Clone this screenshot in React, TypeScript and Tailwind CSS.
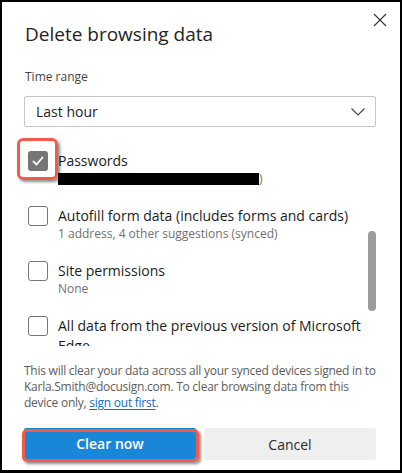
import React from "react";

const Box: React.FC<{ checked?: boolean }> = ({ checked }) =>
    checked ? (
        <div className="w-[20px] h-[20px] shrink-0 rounded-[3px] bg-[#767676] flex items-center justify-center">
            <svg width="14" height="14" viewBox="0 0 14 14" fill="none">
                <path d="M2.5 7.5 L5.5 10.5 L11.5 3.5" stroke="white" strokeWidth="1.8" strokeLinecap="round" strokeLinejoin="round" />
            </svg>
        </div>
    ) : (
        <div className="w-[20px] h-[20px] shrink-0 rounded-[3px] border border-[#767676] bg-white" />
    );

const Item: React.FC<{ title: string; sub?: React.ReactNode; checked?: boolean }> = ({ title, sub, checked }) => (
    <div className="flex gap-[10px] pl-[4px]">
        <Box checked={checked} />
        <div className="flex flex-col">
            <div className="text-[14px] leading-[20px] text-[#1b1b1b]">{title}</div>
            {sub && <div className="text-[12px] leading-[16px] text-[#707070]">{sub}</div>}
        </div>
    </div>
);

export default function App() {
    return (
        <div className="w-[402px] h-[473px] border-2 border-b-[3px] border-black bg-white relative flex flex-col px-[22px] font-['Open_Sans',sans-serif]">
            <button className="absolute right-[13px] top-[11px] w-[14px] h-[14px] flex items-center justify-center">
                <svg width="14" height="14" viewBox="0 0 14 14" fill="none">
                    <path d="M1 1 L13 13 M13 1 L1 13" stroke="#333" strokeWidth="1.1" />
                </svg>
            </button>

            <h1 className="mt-[18px] ml-[1px] text-[19px] leading-[28px] text-[#242424]">Delete browsing data</h1>

            <div className="mt-[21px] ml-[1px] text-[12px] leading-[16px] text-[#444]">Time range</div>

            <div className="mt-[11px] h-[31px] w-[352px] border border-[#c6c6c6] rounded-[2px] flex items-center justify-between pl-[11px] pr-[10px]">
                <span className="text-[14px] text-[#242424]">Last hour</span>
                <svg width="14" height="8" viewBox="0 0 14 8" fill="none">
                    <path d="M0.5 0.5 L7 7 L13.5 0.5" stroke="#444" strokeWidth="1.1" />
                </svg>
            </div>

            <div className="relative h-[217px] mt-[2px] overflow-hidden">
                <div className="flex flex-col gap-[19px] pt-[22px]">
                    <Item
                        title="Passwords"
                        checked
                        sub={
                            <span className="flex items-center">
                                <span className="inline-block w-[201px] h-[12px] bg-black" />
                                <span>)</span>
                            </span>
                        }
                    />
                    <Item title="Autofill form data (includes forms and cards)" sub="1 address, 4 other suggestions (synced)" />
                    <Item title="Site permissions" sub="None" />
                    <Item title="All data from the previous version of Microsoft Edge" />
                </div>
                <div className="absolute right-[2px] top-[102px] w-[8px] h-[80px] rounded-full bg-[#9c9c9c]" />
            </div>

            {/* red annotation around the Passwords checkbox */}
            <div className="absolute left-[15px] top-[136px] w-[41px] h-[42px] rounded-[6px] border-[3px] border-[#f25a4a] shadow-[2px_2px_3px_rgba(0,0,0,0.45)]" />

            <p className="mt-[17px] text-[12px] leading-[16px] tracking-[-0.25px] text-[#5c5c5c]">
                This will clear your data across all your synced devices signed in to Karla.Smith@docusign.com. To clear browsing data from this device only,{" "}
                <a className="text-[#0f6cbd] underline underline-offset-2">sign out first</a>.
            </p>

            <div className="mt-[17px] flex gap-[8px]">
                <div className="relative w-[172px]">
                    <button className="w-full h-[31px] bg-[#1a86d8] text-white text-[14px] font-semibold rounded-[2px]">Clear now</button>
                    <div className="absolute left-[-2px] top-[1px] w-[177px] h-[33px] rounded-[5px] border-[3px] border-[#f25a4a] shadow-[2px_2px_3px_rgba(0,0,0,0.45)]" />
                </div>
                <button className="w-[172px] h-[32px] bg-[#efefef] text-[#2b2b2b] text-[14px] rounded-[3px]">Cancel</button>
            </div>
        </div>
    );
}
